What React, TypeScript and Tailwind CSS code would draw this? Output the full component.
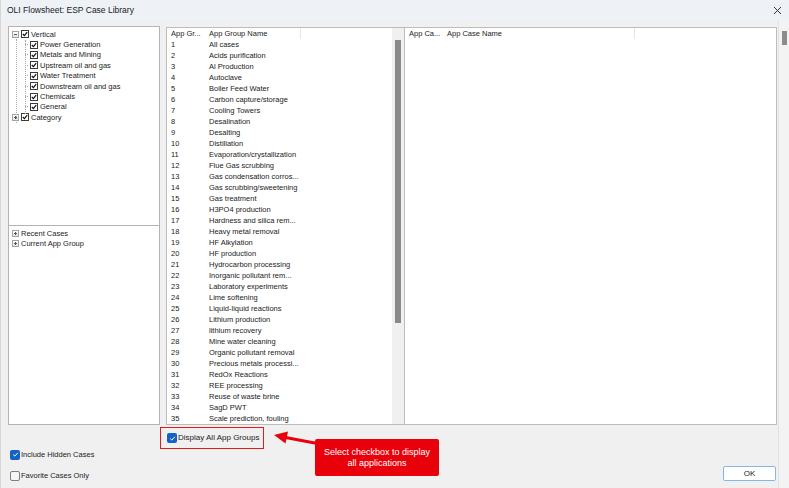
import React from 'react'

const groups: string[] = [
  'All cases',
  'Acids purification',
  'Al Production',
  'Autoclave',
  'Boiler Feed Water',
  'Carbon capture/storage',
  'Cooling Towers',
  'Desalination',
  'Desalting',
  'Distillation',
  'Evaporation/crystallization',
  'Flue Gas scrubbing',
  'Gas condensation corros...',
  'Gas scrubbing/sweetening',
  'Gas treatment',
  'H3PO4 production',
  'Hardness and silica rem...',
  'Heavy metal removal',
  'HF Alkylation',
  'HF production',
  'Hydrocarbon processing',
  'Inorganic pollutant rem...',
  'Laboratory experiments',
  'Lime softening',
  'Liquid-liquid reactions',
  'Lithium production',
  'lithium recovery',
  'Mine water cleaning',
  'Organic pollutant removal',
  'Precious metals processi...',
  'RedOx Reactions',
  'REE processing',
  'Reuse of waste brine',
  'SagD PWT',
  'Scale prediction, fouling'
]

const verticals = [
  'Power Generation',
  'Metals and Mining',
  'Upstream oil and gas',
  'Water Treatment',
  'Downstream oil and gas',
  'Chemicals',
  'General'
]

function TreeCheck() {
  return (
    <span className="flex h-[8px] w-[8px] shrink-0 items-center justify-center border border-[#3a3a3a] bg-white">
      <svg width="6" height="6" viewBox="0 0 6 6">
        <path d="M0.8 3 L2.4 4.6 L5.2 1.2" fill="none" stroke="#111" strokeWidth="1.2" />
      </svg>
    </span>
  )
}

function Expander({ open }: { open: boolean }) {
  return (
    <span className="flex h-[7px] w-[7px] shrink-0 items-center justify-center border border-[#a3a3a3] bg-gradient-to-b from-white to-[#e4e4e4]">
      <svg width="5" height="5" viewBox="0 0 5 5">
        <path d="M1 2.5 H4" stroke="#555" strokeWidth="1" />
        {!open && <path d="M2.5 1 V4" stroke="#555" strokeWidth="1" />}
      </svg>
    </span>
  )
}

function BlueCheck() {
  return (
    <span className="flex h-[10px] w-[10px] shrink-0 items-center justify-center rounded-[2px] bg-[#1462c2]">
      <svg width="7" height="7" viewBox="0 0 7 7">
        <path d="M1.2 3.6 L2.8 5.1 L5.9 1.8" fill="none" stroke="#fff" strokeWidth="1" />
      </svg>
    </span>
  )
}

export default function App() {
  return (
    <div className="relative flex h-[488px] w-[789px] flex-col overflow-hidden border-l border-[#d6d6d6] bg-[#f0f0f0] font-['Liberation_Sans',Arial,sans-serif] text-[#1b1b1b]">
      {/* title bar */}
      <div className="flex h-[20px] shrink-0 items-center justify-between bg-[#eef2f7] pl-[6px] pr-[6px]">
        <span className="text-[8.5px] leading-none text-[#1a1a1a]">OLI Flowsheet: ESP Case Library</span>
        <svg width="9" height="9" viewBox="0 0 9 9" className="mr-[1px]">
          <path d="M1 1 L8 8 M8 1 L1 8" stroke="#333" strokeWidth="1" />
        </svg>
      </div>

      <div className="flex flex-1">
        {/* left column */}
        <div className="ml-[7px] flex w-[152px] flex-col pt-[6px] text-[7.5px]">
          <div className="relative h-[200px] border border-[#b3b3b3] bg-white pl-[3px] pt-[2px]">
            <div className="absolute left-[7px] top-[12px] h-[84px] border-l border-dotted border-[#a8a8a8]" />
            <div className="absolute left-[16px] top-[13px] h-[74px] border-l border-dotted border-[#a8a8a8]" />
            <div className="flex h-[10.4px] items-center gap-[2px]">
              <Expander open />
              <TreeCheck />
              <span>Vertical</span>
            </div>
            {verticals.map((v) => (
              <div key={v} className="flex h-[10.4px] items-center pl-[13px]">
                <span className="mr-[2px] w-[3px] border-t border-dotted border-[#a8a8a8]" />
                <TreeCheck />
                <span className="ml-[2px]">{v}</span>
              </div>
            ))}
            <div className="flex h-[10.4px] items-center gap-[2px]">
              <Expander open={false} />
              <TreeCheck />
              <span>Category</span>
            </div>
          </div>
          <div className="h-[199px] border border-t-0 border-[#b3b3b3] bg-white pl-[3px] pt-[2px]">
            <div className="flex h-[10.4px] items-center gap-[2px]">
              <Expander open={false} />
              <span>Recent Cases</span>
            </div>
            <div className="flex h-[10.4px] items-center gap-[2px]">
              <Expander open={false} />
              <span>Current App Group</span>
            </div>
          </div>
          <div className="ml-[2px] mt-[24px] flex h-[11px] items-center gap-[1px] text-[7.5px]">
            <BlueCheck />
            <span>Include Hidden Cases</span>
          </div>
          <div className="ml-[2px] mt-[10px] flex h-[11px] items-center gap-[1px] text-[7.5px]">
            <span className="h-[10px] w-[10px] rounded-[2px] border border-[#808080] bg-[#f6f6f6]" />
            <span>Favorite Cases Only</span>
          </div>
        </div>

        {/* middle list */}
        <div className="ml-[6px] flex w-[239px] flex-col pt-[7px]">
          <div className="flex h-[398px] border border-[#bdbdbd] bg-white text-[7.5px]">
            <div className="flex-1 pl-[4px]">
              <div className="flex h-[11px] items-center">
                <span className="w-[38px]">App Gr...</span>
                <span className="h-full w-[92px] border-r border-[#e6e6e6] leading-[11px]">App Group Name</span>
              </div>
              {groups.map((g, i) => (
                <div key={g} className="flex h-[11px] items-center">
                  <span className="w-[38px]">{i + 1}</span>
                  <span>{g}</span>
                </div>
              ))}
            </div>
            <div className="w-[12px] bg-[#f0f0f0] pl-[3px] pt-[12px]">
              <div className="h-[283px] w-[6px] bg-[#8a8a8a]" />
            </div>
          </div>
          <div className="-ml-[6px] mt-[2px] flex h-[22px] w-[104px] items-center gap-[1px] border-[1.5px] border-[#e01b1b] pl-[6px] text-[8px]">
            <BlueCheck />
            <span>Display All App Groups</span>
          </div>
        </div>

        {/* right list */}
        <div className="flex w-[372px] flex-col pt-[7px]">
          <div className="h-[398px] border border-l-0 border-[#bdbdbd] bg-white pl-[4px] text-[7.5px]">
            <div className="flex h-[11px] items-center">
              <span className="w-[38px]">App Ca...</span>
              <span className="h-full w-[188px] border-r border-[#e6e6e6] leading-[11px]">App Case Name</span>
            </div>
          </div>
          <button className="mr-[1px] mt-[41px] flex h-[15px] w-[53px] items-center justify-center self-end rounded-[2px] border border-[#86b6e6] bg-white text-[8px] text-[#1b1b1b]">
            OK
          </button>
        </div>

        {/* window scrollbar */}
        <div className="ml-[1px] flex-1 border-l border-[#e2e2e2] bg-[#f3f3f3] pl-[3px] pt-[11px]">
          <div className="h-[14px] w-[5px] bg-[#8c8c8c]" />
        </div>
      </div>

      {/* annotation arrow */}
      <svg className="absolute left-[270px] top-[426px]" width="52" height="22" viewBox="0 0 52 22">
        <path d="M12 11 L49 18" stroke="#e8000b" strokeWidth="3" />
        <polygon points="3,9 17,5.5 14.5,17.5" fill="#e8000b" />
      </svg>

      {/* annotation callout */}
      <div className="absolute left-[314px] top-[439px] flex h-[37px] w-[124px] flex-col items-center justify-center rounded-[2px] bg-[#e8000b] text-[9px] leading-[11px] text-white">
        <span>Select checkbox to display</span>
        <span>all applications</span>
      </div>
    </div>
  )
}
